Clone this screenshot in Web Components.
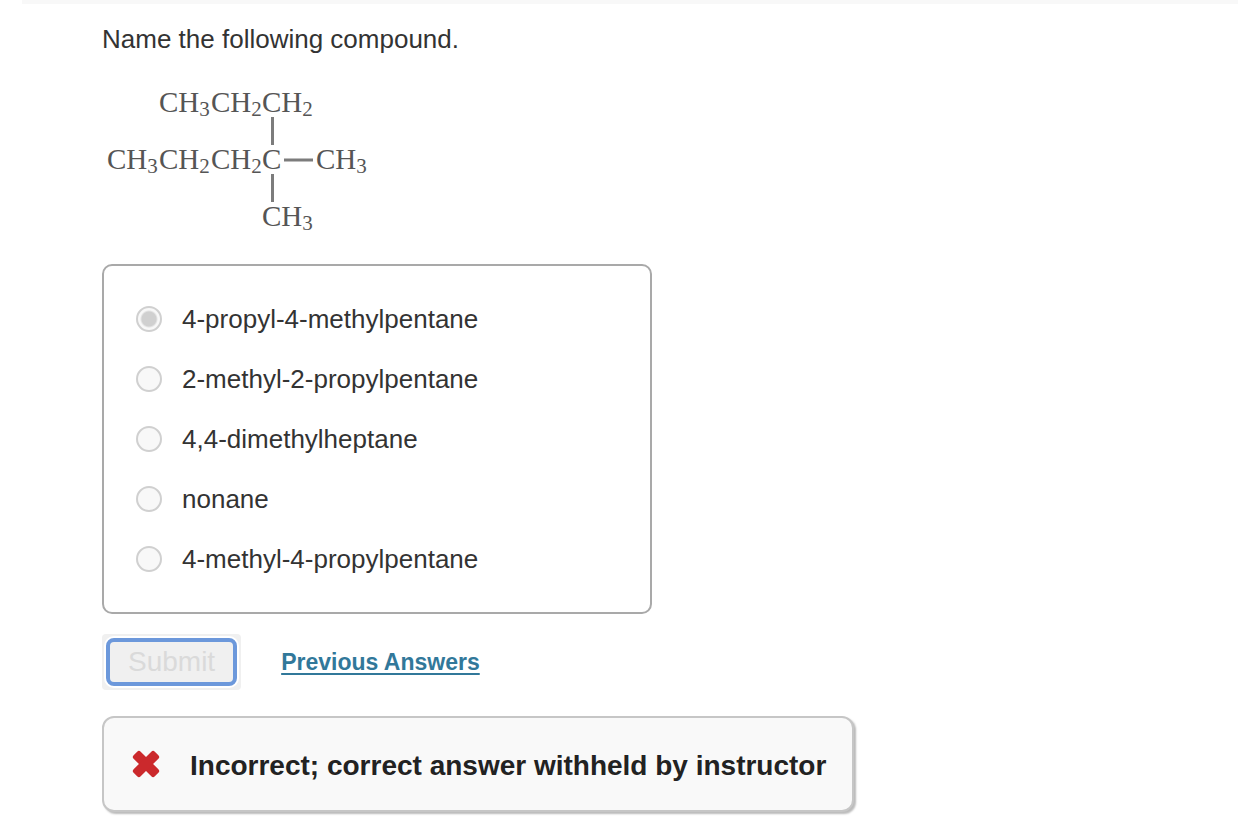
<!DOCTYPE html>
<html lang="en">
<head>
<meta charset="utf-8">
<meta name="viewport" content="width=device-width, initial-scale=1">
<title>Question</title>
<style>
body { margin: 0; background: #fff; color: #333; font-family: "Liberation Sans", Arial, sans-serif; font-size: 26px; line-height: 32px; }
</style>
</head>
<body>
<question-page>
  <span slot="prompt">Name the following compound.</span>
  <compound-formula></compound-formula>
  <answer-choices selected="0" options="4-propyl-4-methylpentane|2-methyl-2-propylpentane|4,4-dimethylheptane|nonane|4-methyl-4-propylpentane"></answer-choices>
  <answer-actions></answer-actions>
  <answer-feedback>Incorrect; correct answer withheld by instructor</answer-feedback>
</question-page>
<script>
class BaseElement extends HTMLElement {
  constructor() {
    super();
    this.attachShadow({ mode: 'open' });
  }
  connectedCallback() {
    this.shadowRoot.innerHTML = this.render();
  }
}

customElements.define('question-page', class extends BaseElement {
  render() {
    return `<style>
      :host { display: block; }
      .rule { height: 4px; margin-left: 22px; background: #f8f8f8; }
      main { display: flex; flex-direction: column; align-items: flex-start; padding: 19px 24px 16px 102px; }
      p { margin: 0 0 25px; }
    </style>
    <div class="rule"></div>
    <main><p><slot name="prompt"></slot></p><slot></slot></main>`;
  }
});

customElements.define('compound-formula', class extends BaseElement {
  // One CHn group; the subscript is optional.
  group(x, y, sub) {
    return `<text x="${x}" y="${y}">C${sub ? `H<tspan class="sub" dy="4">${sub}</tspan>` : ''}</text>`;
  }
  render() {
    return `<style>
      :host { display: block; margin-bottom: 28px; }
      svg { display: block; }
      text { font: 29px "Liberation Serif", "Times New Roman", serif; fill: #555; }
      .sub { font-size: 21px; }
      path { stroke: #7c7c7c; stroke-width: 3; fill: none; }
    </style>
    <svg width="270" height="156" viewBox="0 0 270 156" role="img" aria-label="Structural formula">
      ${this.group(57, 32, 3)}${this.group(109, 32, 2)}${this.group(160, 32, 2)}
      ${this.group(5, 89, 3)}${this.group(57, 89, 2)}${this.group(109, 89, 2)}${this.group(160, 89)}${this.group(214, 89, 3)}
      ${this.group(160, 146, 3)}
      <path d="M170.500 37V65M170.500 94V122M182 80H211"/>
    </svg>`;
  }
});

customElements.define('answer-choices', class extends BaseElement {
  render() {
    const selected = Number(this.getAttribute('selected'));
    const rows = this.getAttribute('options').split('|').map((text, i) => `
      <div class="row">
        <input type="radio" name="answer" id="o${i}" disabled ${i === selected ? 'checked' : ''}>
        <label for="o${i}">${text}</label>
      </div>`).join('');
    return `<style>
      :host { display: block; width: 100%; max-width: 550px; margin-bottom: 20px; }
      fieldset { margin: 0; padding: 23px 32px; min-width: 0; border: 2px solid #a9a9a9; border-radius: 10px; }
      .row { display: flex; align-items: center; gap: 20px; min-height: 60px; }
      input { appearance: none; flex: none; box-sizing: border-box; width: 26px; height: 26px; margin: 0; border: 2px solid #d0d0d0; border-radius: 50%; background: #f8f8f8; }
      input:checked { background: radial-gradient(circle, #d0d0d0 0 7px, #f8f8f8 9px); }
    </style>
    <fieldset aria-label="Answer choices">${rows}</fieldset>`;
  }
});

customElements.define('answer-actions', class extends BaseElement {
  render() {
    return `<style>
      :host { display: flex; align-items: center; gap: 40px; margin-bottom: 26px; }
      .ring { display: flex; padding: 4px; border-radius: 4px; background: #f0f0f0; }
      button { box-sizing: border-box; height: 48px; padding: 0 18px; border: 4px solid #6c98db; border-radius: 8px; background: #f0f0f0; color: #dadada; font: inherit; font-size: 28px; line-height: 32px; box-shadow: 0 0 0 2px #fff; }
      a { color: #31789a; font-size: 23px; font-weight: bold; text-decoration-thickness: 2px; text-underline-offset: 3px; text-decoration-skip-ink: none; }
    </style>
    <div class="ring"><button type="button" disabled>Submit</button></div>
    <a href="#previous">Previous Answers</a>`;
  }
});

customElements.define('answer-feedback', class extends BaseElement {
  render() {
    return `<style>
      :host { display: flex; align-items: center; gap: 30px; box-sizing: border-box; min-height: 96px; width: 100%; max-width: 752px; padding: 0 16px 0 28px; border: 2px solid #c6c6c6; border-radius: 12px; background: #f9f9f9; color: #222; font-size: 28px; font-weight: bold; box-shadow: 2px 2px 2px #bbb; }
      svg { flex: none; }
      span { padding-top: 4px; }
    </style>
    <svg width="28" height="28" viewBox="0 0 28 28" aria-hidden="true"><g fill="#cb292c" transform="rotate(45 14 14)"><rect x="-1" y="9" width="30" height="10" rx="2.500"/><rect x="9" y="-1" width="10" height="30" rx="2.500"/></g></svg>
    <span><slot></slot></span>`;
  }
});
</script>
</body>
</html>
